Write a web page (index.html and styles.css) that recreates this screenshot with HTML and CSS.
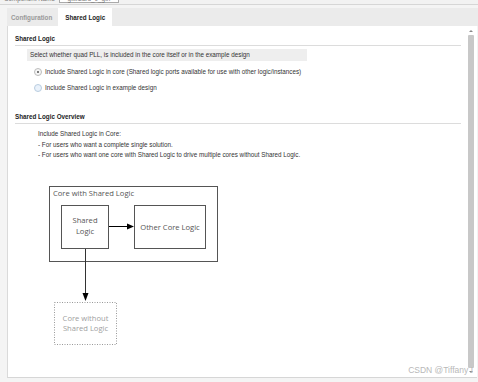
FILE: index.html
```html
<!DOCTYPE html>
<html>
<head>
<meta charset="utf-8">
<link rel="stylesheet" href="styles.css">
</head>
<body>
<div class="app">
  <div class="top"><span class="top-text">Component Name&nbsp;&nbsp;<span class="boxed">gtwizard_0_gth</span></span></div>
  <div class="tabs">
    <div class="tab">Configuration</div>
    <div class="tab active">Shared Logic</div>
  </div>
  <div class="panel">
    <div class="content">
      <div class="section-title">Shared Logic</div>
      <div class="hint">Select whether quad PLL, is included in the core itself or in the example design</div>
      <div class="radio-row"><span class="radio checked"></span>Include Shared Logic in core (Shared logic ports available for use with other logic/instances)</div>
      <div class="radio-row"><span class="radio"></span>Include Shared Logic in example design</div>
      <div class="section-title second">Shared Logic Overview</div>
      <div class="desc">
        <div>Include Shared Logic in Core:</div>
        <div>- For users who want a complete single solution.</div>
        <div>- For users who want one core with Shared Logic to drive multiple cores without Shared Logic.</div>
      </div>
      <svg class="diagram" width="180" height="175" viewBox="0 0 180 175">
        <rect x="0.5" y="0.5" width="168" height="75" fill="#fff" stroke="#555" stroke-width="1"/>
        <text x="4" y="9.5" class="dtext">Core with Shared Logic</text>
        <rect x="12.5" y="19.5" width="47" height="43" fill="#fff" stroke="#555" stroke-width="1"/>
        <text x="36" y="37" class="dtext" text-anchor="middle">Shared</text>
        <text x="36" y="48" class="dtext" text-anchor="middle">Logic</text>
        <rect x="85.5" y="19.5" width="71" height="43" fill="#fff" stroke="#555" stroke-width="1"/>
        <text x="121" y="43.5" class="dtext" text-anchor="middle">Other Core Logic</text>
        <line x1="60" y1="40.5" x2="78" y2="40.5" stroke="#000" stroke-width="1"/>
        <polygon points="78,37.5 85,40.5 78,43.5" fill="#000"/>
        <line x1="36.5" y1="63" x2="36.5" y2="108" stroke="#333" stroke-width="1"/>
        <polygon points="33.5,107 39.5,107 36.5,115" fill="#000"/>
        <rect x="5.5" y="116.5" width="62" height="42" fill="#fff" stroke="#999" stroke-width="1" stroke-dasharray="1,1.5"/>
        <text x="36.5" y="135" class="dtext light" text-anchor="middle">Core without</text>
        <text x="36.5" y="145" class="dtext light" text-anchor="middle">Shared Logic</text>
      </svg>
    </div>
    <div class="scrollbar">
      <div class="arrow up"></div>
      <div class="thumb"></div>
      <div class="arrow down"></div>
    </div>
    <div class="watermark">CSDN @Tiffany I</div>
  </div>
</div>
</body>
</html>
```
FILE: styles.css
```css
html, body {
  margin: 0;
  padding: 0;
  background: #f4f4f4;
}
body {
  font-family: "Liberation Sans", Arial, sans-serif;
  font-size: 6.3px;
  color: #222;
}
.app {
  width: 478px;
  height: 382px;
  display: flex;
  flex-direction: column;
  overflow: hidden;
}
.top {
  height: 4px;
  overflow: hidden;
  border-bottom: 1px solid #d6d6d6;
  background: #f2f2f2;
}
.top-text {
  display: block;
  margin-top: -5px;
  padding-left: 4px;
  line-height: 8px;
  color: #777;
}
.boxed {
  border: 1px solid #aaa;
  background: #fff;
  padding: 0 8px;
}
.tabs {
  display: flex;
  margin-top: 3px;
  margin-left: 7px;
  height: 18px;
  background: #ebebeb;
}
.tab {
  display: flex;
  align-items: center;
  padding: 0 6px 0 4px;
  color: #999;
  font-weight: bold;
}
.tab.active {
  background: #fff;
  color: #222;
  padding: 0 7px 0 7px;
}
.panel {
  flex: 1;
  margin-left: 7px;
  margin-right: 1px;
  background: #fff;
  border-left: 1px solid #dadada;
  border-bottom: 1px solid #d6d6d6;
  display: flex;
  position: relative;
  margin-bottom: 4px;
}
.content {
  flex: 1;
  padding: 9px 0 0 7px;
}
.section-title {
  font-weight: bold;
  color: #222;
  padding-bottom: 2px;
  border-bottom: 1px solid #dcdcdc;
  margin-right: 5px;
  line-height: 8px;
}
.section-title.second {
  margin-top: 21px;
}
.hint {
  display: inline-block;
  margin: 3px 0 0 12px;
  width: 274px;
  padding: 2px 3px;
  background: #eeeeee;
  line-height: 8px;
  color: #333;
}
.radio-row {
  display: flex;
  align-items: center;
  margin-left: 19px;
  line-height: 8px;
  margin-top: 7px;
  color: #333;
}
.radio-row + .radio-row {
  margin-top: 8px;
}
.radio {
  width: 6px;
  height: 6px;
  border-radius: 50%;
  border: 1px solid #b9cde0;
  background: #eaf2fb;
  margin-right: 3px;
  position: relative;
  box-sizing: content-box;
}
.radio.checked {
  border-color: #bcbcbc;
  background: #f6f6f6;
}
.radio.checked::after {
  content: "";
  position: absolute;
  left: 2px;
  top: 2px;
  width: 2px;
  height: 2px;
  border-radius: 50%;
  background: #555;
}
.desc {
  margin: 5px 0 0 23px;
  line-height: 10.5px;
  color: #333;
}
.diagram {
  display: block;
  margin: 25px 0 0 34px;
}
.dtext {
  font-family: "Open Sans", "Liberation Sans", sans-serif;
  font-size: 7.6px;
  fill: #555;
}
.dtext.light {
  fill: #a0a0a0;
}
.scrollbar {
  width: 10px;
  margin-right: 1px;
  display: flex;
  flex-direction: column;
  align-items: center;
  padding: 2px 0;
}
.arrow {
  width: 0;
  height: 0;
  border-left: 2px solid transparent;
  border-right: 2px solid transparent;
}
.arrow.up {
  border-bottom: 2px solid #888;
  margin: 2px 0 3px;
}
.arrow.down {
  border-top: 2px solid #888;
  margin: 3px 0 2px;
}
.thumb {
  flex: 1;
  width: 6px;
  background: #c8c8c8;
  border-radius: 1px;
}
.watermark {
  position: absolute;
  right: 4px;
  bottom: 2px;
  z-index: 2;
  font-family: "Liberation Sans", Arial, sans-serif;
  font-size: 8.5px;
  color: #b8b8b8;
}
```
